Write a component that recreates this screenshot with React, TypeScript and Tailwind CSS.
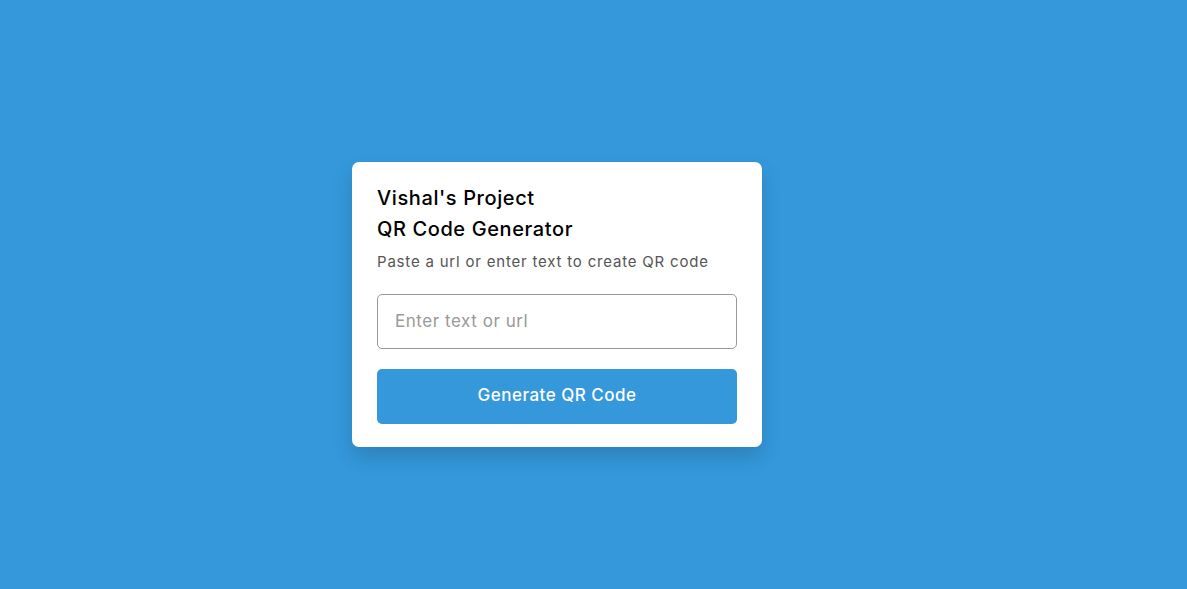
export default function App() {
  return (
    <div
      className="flex h-screen w-full items-center justify-center bg-[#3498db] pr-[73px] pt-[19px]"
      style={{ fontFamily: 'Inter, "Noto Sans", sans-serif' }}
    >
      <div className="flex w-[410px] flex-col rounded-[7px] bg-white px-[25px] pb-[23px] pt-[21px] shadow-[0_10px_20px_rgba(0,0,0,0.15)]">
        <h1 className="text-[20px] font-medium leading-[31px] tracking-[0.6px] text-black">
          Vishal's Project
          <br />
          QR Code Generator
        </h1>
        <p className="mt-[6px] text-[15px] leading-[22px] tracking-[0.8px] text-[#555]">
          Paste a url or enter text to create QR code
        </p>
        <input
          type="text"
          placeholder="Enter text or url"
          className="mt-[21px] h-[55px] w-full rounded-[5px] border border-[#999] px-[17px] text-[17px] tracking-[0.55px] text-black outline-none placeholder:text-[#999]"
        />
        <button className="mt-[20px] h-[55px] w-full rounded-[5px] bg-[#3498db] text-[17px] font-medium tracking-[0.5px] text-white">
          Generate QR Code
        </button>
      </div>
    </div>
  )
}
